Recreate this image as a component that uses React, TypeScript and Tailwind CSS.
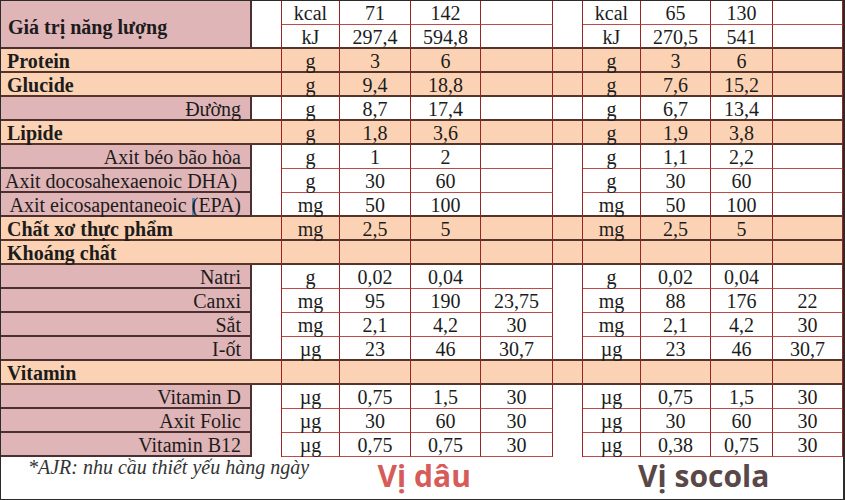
import React from "react";

type Side = [string, string, string, string];
type Row = {
  type: "section" | "sub";
  label: string;
  s: Side;
  c: Side;
  align?: "left" | "right";
  epa?: boolean;
};

const rows: Row[] = [
  { type: "section", label: "Protein", s: ["g", "3", "6", ""], c: ["g", "3", "6", ""] },
  { type: "section", label: "Glucide", s: ["g", "9,4", "18,8", ""], c: ["g", "7,6", "15,2", ""] },
  { type: "sub", label: "Đường", s: ["g", "8,7", "17,4", ""], c: ["g", "6,7", "13,4", ""] },
  { type: "section", label: "Lipide", s: ["g", "1,8", "3,6", ""], c: ["g", "1,9", "3,8", ""] },
  { type: "sub", label: "Axit béo bão hòa", s: ["g", "1", "2", ""], c: ["g", "1,1", "2,2", ""] },
  { type: "sub", label: "Axit docosahexaenoic DHA)", s: ["g", "30", "60", ""], c: ["g", "30", "60", ""], align: "left" },
  { type: "sub", label: "Axit eicosapentaneoic ", s: ["mg", "50", "100", ""], c: ["mg", "50", "100", ""], epa: true },
  { type: "section", label: "Chất xơ thực phẩm", s: ["mg", "2,5", "5", ""], c: ["mg", "2,5", "5", ""] },
  { type: "section", label: "Khoáng chất", s: ["", "", "", ""], c: ["", "", "", ""] },
  { type: "sub", label: "Natri", s: ["g", "0,02", "0,04", ""], c: ["g", "0,02", "0,04", ""] },
  { type: "sub", label: "Canxi", s: ["mg", "95", "190", "23,75"], c: ["mg", "88", "176", "22"] },
  { type: "sub", label: "Sắt", s: ["mg", "2,1", "4,2", "30"], c: ["mg", "2,1", "4,2", "30"] },
  { type: "sub", label: "I-ốt", s: ["µg", "23", "46", "30,7"], c: ["µg", "23", "46", "30,7"] },
  { type: "section", label: "Vitamin", s: ["", "", "", ""], c: ["", "", "", ""] },
  { type: "sub", label: "Vitamin D", s: ["µg", "0,75", "1,5", "30"], c: ["µg", "0,75", "1,5", "30"] },
  { type: "sub", label: "Axit Folic", s: ["µg", "30", "60", "30"], c: ["µg", "30", "60", "30"] },
  { type: "sub", label: "Vitamin B12", s: ["µg", "0,75", "0,75", "30"], c: ["µg", "0,38", "0,75", "30"] },
];

const base = "leading-[22px] pt-px whitespace-nowrap text-center";
const vRight = "border-r border-r-[#9a2424]";
const darkB = "border-b-2 border-b-[#553429]";
const redB = "border-b border-b-[#bf4a47]";

function Values({ vals, bg, bottom }: { vals: Side; bg: string; bottom: string }) {
  return (
    <>
      {vals.map((v, i) => (
        <div key={i} className={`${base} ${bg} ${vRight} ${bottom}`}>
          {v}
        </div>
      ))}
    </>
  );
}

export default function App() {
  return (
    <div className="w-[845px] h-[500px] bg-white border border-[#2b2b2b] border-r-2 overflow-hidden text-[20px] text-[#1c1c1c] font-[Liberation_Serif]">
      <div className="grid grid-cols-[251px_30px_58px_71px_70px_72px_30px_58px_70px_62px_70px] auto-rows-[24px]">
        <div className="row-span-2 bg-[#e0b5b7] border-r-2 border-r-[#4a3030] border-b-2 border-b-[#4a3030] flex items-center pl-[7px] pt-[5px] font-bold">
          Giá trị năng lượng
        </div>
        <div className={`row-span-2 bg-white ${vRight} ${darkB}`} />
        <Values vals={["kcal", "71", "142", ""]} bg="bg-white" bottom={redB} />
        <div className={`row-span-2 bg-white ${vRight} ${darkB}`} />
        <Values vals={["kcal", "65", "130", ""]} bg="bg-white" bottom={redB} />
        <Values vals={["kJ", "297,4", "594,8", ""]} bg="bg-white" bottom={darkB} />
        <Values vals={["kJ", "270,5", "541", ""]} bg="bg-white" bottom={darkB} />

        {rows.map((r, idx) => {
          const next = rows[idx + 1];
          const nextSection = next ? next.type === "section" : false;
          if (r.type === "section") {
            return (
              <React.Fragment key={idx}>
                <div className={`col-span-2 leading-[22px] pt-px pl-[6px] font-bold bg-[#fbd3b4] ${vRight} ${darkB}`}>
                  {r.label}
                </div>
                <Values vals={r.s} bg="bg-[#fbd3b4]" bottom={darkB} />
                <div className={`bg-[#fbd3b4] ${vRight} ${darkB}`} />
                <Values vals={r.c} bg="bg-[#fbd3b4]" bottom={darkB} />
              </React.Fragment>
            );
          }
          const bottom = nextSection ? darkB : redB;
          const gapBottom = nextSection ? darkB : "";
          return (
            <React.Fragment key={idx}>
              <div
                className={`leading-[22px] pt-px whitespace-nowrap bg-[#e0b5b7] border-r-2 border-r-[#4a3030] border-b-2 border-b-[#4a3030] ${
                  r.align === "left" ? "text-left pl-[4px]" : "text-right pr-[9px]"
                }`}
              >
                {r.label}
                {r.epa && (
                  <>
                    <span className="inline-block w-[3px] h-[17px] bg-[#5f86bf] align-[-3px] -mr-[3px]" />
                    (EPA)
                  </>
                )}
              </div>
              <div className={`bg-white ${vRight} ${gapBottom}`} />
              <Values vals={r.s} bg="bg-white" bottom={bottom} />
              <div className={`bg-white ${vRight} ${gapBottom}`} />
              <Values vals={r.c} bg="bg-white" bottom={bottom} />
            </React.Fragment>
          );
        })}
      </div>

      <div className="flex h-[42px]">
        <div className="w-[281px] pl-[27px] italic text-[20px] leading-[20px] text-[#333] whitespace-nowrap">
          *AJR: nhu cầu thiết yếu hàng ngày
        </div>
        <div className="w-[271px] pl-[14px] flex justify-center">
          <span className="mt-[4px] text-[30px] leading-[30px] font-bold font-[Open_Sans] text-[#d65c5a]">
            Vị dâu
          </span>
        </div>
        <div className="w-[30px]" />
        <div className="w-[261px] pr-[18px] flex justify-center">
          <span className="mt-[4px] text-[30px] leading-[30px] font-bold font-[Open_Sans] text-[#5a4747]">
            Vị socola
          </span>
        </div>
      </div>
    </div>
  );
}
